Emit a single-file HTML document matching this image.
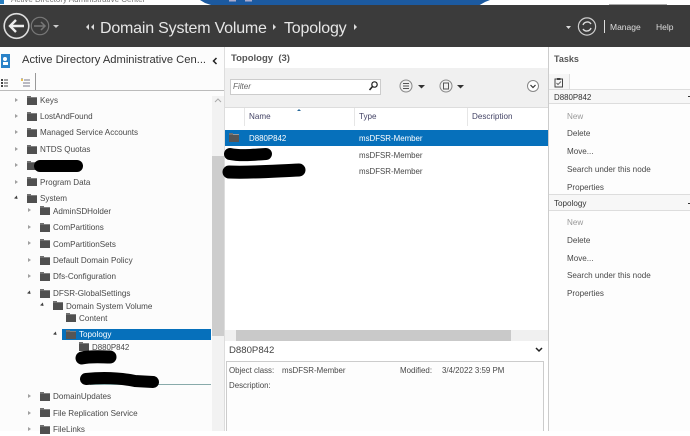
<!DOCTYPE html>
<html><head><meta charset="utf-8"><style>
html,body{margin:0;padding:0}
body{width:690px;height:431px;overflow:hidden;position:relative;background:#fff;font-family:"Liberation Sans",sans-serif;color:#333;font-size:8.1px;filter:blur(.25px)}
.a{position:absolute;white-space:nowrap}
.t{position:absolute;white-space:nowrap;line-height:12px;color:#484848;margin-top:1px}
.n{font-size:7.9px}
.f{position:absolute;width:10px;height:7px;background:#505050;border-top:1px solid #808080}
.f:before{content:"";position:absolute;left:0;top:-2px;width:4px;height:2px;background:#707070}
.tri{position:absolute;width:0;height:0;border-left:3px solid #a0a0a0;border-top:2.5px solid transparent;border-bottom:2.5px solid transparent}
.tri.o{border-left:3px solid #444;transform:rotate(45deg)}
.b{position:absolute;background:#000;border-radius:8px}
</style></head><body>
<!-- top strip -->
<div class="a" style="left:0;top:0;width:690px;height:5px;background:#fff"></div>
<div class="a" style="left:11px;top:-5px;color:#777;font-size:8px;line-height:10px">Active Directory Administrative Center</div>
<div class="a" style="left:0;top:0;width:4px;height:4px;background:#2a7fc0"></div>
<svg class="a" style="left:195px;top:0" width="310" height="6"><polygon points="5,0 295,0 290,2 283,6 19,6 10,3" fill="#1c5aa0"/><rect x="34" y="0" width="7" height="1.5" fill="#aac"/><rect x="50" y="0" width="7" height="1.5" fill="#aac"/></svg>
<div class="a" style="left:609px;top:4px;width:58px;height:1px;background:#aaa"></div>
<!-- dark nav -->
<div class="a" style="left:0;top:5px;width:690px;height:42px;background:#3b3b3b"></div>
<svg class="a" style="left:0;top:10px" width="62" height="32">
<circle cx="16.5" cy="16" r="12.3" fill="none" stroke="#ddd" stroke-width="1.6"/>
<path d="M10 16H24M16 10L10 16L16 22" fill="none" stroke="#eee" stroke-width="2.4"/>
<circle cx="40" cy="16" r="8.7" fill="none" stroke="#777" stroke-width="1.2"/>
<path d="M34 16H45M41 12L45 16L41 20" fill="none" stroke="#777" stroke-width="1.5"/>
<polygon points="53,15 59,15 56,18" fill="#ccc"/>
</svg>
<svg class="a" style="left:85px;top:23px" width="11" height="8"><polygon points="4,1 4,7 1,4" fill="#ddd"/><polygon points="9,1 9,7 6,4" fill="#ddd"/></svg>
<div class="a" style="left:100px;top:18px;color:#e6e6e6;font-size:16px;line-height:22px;letter-spacing:-.2px">Domain System Volume</div>
<div class="a" style="left:273px;top:24px;width:0;height:0;border-left:3px solid #ddd;border-top:3px solid transparent;border-bottom:3px solid transparent"></div>
<div class="a" style="left:284px;top:18px;color:#e6e6e6;font-size:16px;line-height:22px;letter-spacing:-.2px">Topology</div>
<div class="a" style="left:354px;top:24px;width:0;height:0;border-left:3px solid #ddd;border-top:3px solid transparent;border-bottom:3px solid transparent"></div>
<svg class="a" style="left:565px;top:16px" width="40" height="22">
<polygon points="1,10 6,10 3.5,13" fill="#ddd"/>
<circle cx="22" cy="10.5" r="8.6" fill="none" stroke="#ccc" stroke-width="1.2"/>
<path d="M18 9A4.5 4.5 0 0 1 26 8M26 12A4.5 4.5 0 0 1 18 13" fill="none" stroke="#ddd" stroke-width="1.4"/>
</svg>
<div class="a" style="left:604px;top:20px;width:1px;height:13px;background:#ddd"></div>
<div class="a" style="left:610px;top:21px;color:#ddd;font-size:8.5px;line-height:12px">Manage</div>
<div class="a" style="left:656px;top:21px;color:#ddd;font-size:8.5px;line-height:12px">Help</div>

<!-- left pane -->
<div class="a" style="left:0;top:47px;width:224px;height:384px;background:#fcfcfc"></div>
<div class="a" style="left:1px;top:54px;width:9px;height:14px;background:#2a82c8"></div>
<div class="a" style="left:3px;top:57px;width:4px;height:4px;border-radius:50%;background:#fff"></div>
<div class="a" style="left:3px;top:62px;width:5px;height:3px;background:#fff"></div>
<div class="a" style="left:22px;top:53px;font-size:11.2px;line-height:15px;color:#333">Active Directory Administrative Cen...</div>
<svg class="a" style="left:211px;top:56px" width="8" height="10"><path d="M5.5 2L2.5 5L5.5 8" fill="none" stroke="#222" stroke-width="1.5"/></svg>
<svg class="a" style="left:0;top:76px" width="36" height="16"><path d="M1 3h2v2H1zM1 6h2v2H1zM1 9h2v2H1z" fill="#444"/><path d="M4 4h4M4 7h4M4 10h4" stroke="#444"/><path d="M21 3h2M24 4h6M23 7h7M23 10h7" stroke="#778" fill="none"/><rect x="21" y="3" width="2" height="2" fill="#e8c050"/></svg>
<div class="a" style="left:0;top:90px;width:35px;height:1px;background:#bbb"></div>
<div class="a" style="left:35px;top:73px;width:1px;height:18px;background:#999"></div>
<div class="a" style="left:35px;top:90px;width:189px;height:1px;background:#bbb"></div>
<!-- scrollbar -->
<div class="a" style="left:212px;top:96px;width:12px;height:335px;background:#f2f2f2"></div>
<div class="a" style="left:212px;top:156px;width:12px;height:180px;background:#cdcdcd"></div>
<svg class="a" style="left:214px;top:98px" width="8" height="6"><path d="M1 4L4 1L7 4" fill="none" stroke="#aaa"/></svg>

<div class="tri" style="left:15px;top:98px"></div><div class="f" style="left:27px;top:97px"></div><div class="t" style="left:40px;top:94px">Keys</div>
<div class="tri" style="left:15px;top:114px"></div><div class="f" style="left:27px;top:113px"></div><div class="t" style="left:40px;top:110px">LostAndFound</div>
<div class="tri" style="left:15px;top:130px"></div><div class="f" style="left:27px;top:129px"></div><div class="t" style="left:40px;top:126px">Managed Service Accounts</div>
<div class="tri" style="left:15px;top:147px"></div><div class="f" style="left:27px;top:146px"></div><div class="t" style="left:40px;top:143px">NTDS Quotas</div>
<div class="tri" style="left:15px;top:163px"></div><div class="f" style="left:27px;top:162px"></div>
<div class="b" style="left:34px;top:160px;width:49px;height:12px"></div>
<div class="tri" style="left:15px;top:180px"></div><div class="f" style="left:27px;top:178px"></div><div class="t" style="left:40px;top:176px">Program Data</div>
<div class="tri o" style="left:15px;top:196px"></div><div class="f" style="left:27px;top:195px"></div><div class="t" style="left:40px;top:192px">System</div>
<div class="tri" style="left:28px;top:208px"></div><div class="f" style="left:40px;top:207px"></div><div class="t" style="left:53px;top:205px">AdminSDHolder</div>
<div class="tri" style="left:28px;top:225px"></div><div class="f" style="left:40px;top:224px"></div><div class="t" style="left:53px;top:221px">ComPartitions</div>
<div class="tri" style="left:28px;top:241px"></div><div class="f" style="left:40px;top:240px"></div><div class="t" style="left:53px;top:238px">ComPartitionSets</div>
<div class="tri" style="left:28px;top:258px"></div><div class="f" style="left:40px;top:257px"></div><div class="t" style="left:53px;top:254px">Default Domain Policy</div>
<div class="tri" style="left:28px;top:274px"></div><div class="f" style="left:40px;top:273px"></div><div class="t" style="left:53px;top:270px">Dfs-Configuration</div>
<div class="tri o" style="left:28px;top:291px"></div><div class="f" style="left:40px;top:290px"></div><div class="t" style="left:53px;top:287px">DFSR-GlobalSettings</div>
<div class="tri o" style="left:41px;top:303px"></div><div class="f" style="left:53px;top:302px"></div><div class="t" style="left:66px;top:300px">Domain System Volume</div>
<div class="f" style="left:66px;top:314px"></div><div class="t" style="left:79px;top:312px">Content</div>
<div class="tri o" style="left:54px;top:332px"></div>
<div class="a" style="left:62px;top:329px;width:149px;height:11px;background:#0670bb"></div>
<div class="f" style="left:66px;top:331px;background:#555"></div><div class="t" style="left:79px;top:328px;color:#fff;line-height:11px">Topology</div>
<div class="f" style="left:79px;top:343px"></div><div class="t n" style="left:92px;top:341px">D880P842</div>
<div class="a" style="left:90px;top:384px;width:121px;height:1px;background:#8aa"></div>
<svg class="a" style="left:70px;top:350px" width="95" height="40"><path d="M12 8C20 6 32 7 40 7" stroke="#000" stroke-width="13" stroke-linecap="round" fill="none"/><path d="M16 29C35 27 50 28 65 31L83 32" stroke="#000" stroke-width="12" stroke-linecap="round" fill="none"/></svg>
<div class="tri" style="left:28px;top:394px"></div><div class="f" style="left:40px;top:393px"></div><div class="t" style="left:53px;top:390px">DomainUpdates</div>
<div class="tri" style="left:28px;top:411px"></div><div class="f" style="left:40px;top:409px"></div><div class="t" style="left:53px;top:407px">File Replication Service</div>
<div class="tri" style="left:28px;top:427px"></div><div class="f" style="left:40px;top:426px"></div><div class="t" style="left:53px;top:423px">FileLinks</div>

<!-- center pane -->
<div class="a" style="left:224px;top:47px;width:324px;height:384px;background:#fff"></div>
<div class="a" style="left:224px;top:47px;width:1px;height:384px;background:#ddd"></div>
<div class="a" style="left:231px;top:53px;font-size:9.5px;font-weight:bold;line-height:12px;color:#555">Topology&nbsp; (3)</div>
<div class="a" style="left:225px;top:68px;width:323px;height:39px;background:#f0f0f0"></div>
<div class="a" style="left:230px;top:79px;width:149px;height:14px;background:#fff;border:1px solid #ccc"></div>
<div class="a" style="left:233px;top:81px;font-style:italic;color:#666;line-height:12px">Filter</div>
<svg class="a" style="left:368px;top:80px" width="11" height="12"><circle cx="6.5" cy="4.5" r="2.7" fill="none" stroke="#222" stroke-width="1.2"/><path d="M4.5 6.5L1.5 10" stroke="#222" stroke-width="1.6"/></svg>
<svg class="a" style="left:398px;top:78px" width="90" height="16"><circle cx="8" cy="8" r="6" fill="none" stroke="#888"/><path d="M5 5.5h6M5 8h6M5 10.5h6" stroke="#555"/><polygon points="20,7 27,7 23.5,10.5" fill="#333"/><circle cx="48" cy="8" r="6" fill="none" stroke="#888"/><rect x="45.5" y="5" width="5" height="6" fill="none" stroke="#555"/><polygon points="59,7 66,7 62.5,10.5" fill="#333"/></svg>
<svg class="a" style="left:526px;top:79px" width="14" height="14"><circle cx="7" cy="7" r="5.5" fill="#fff" stroke="#888"/><path d="M4.5 6L7 8.5L9.5 6" fill="none" stroke="#333" stroke-width="1.2"/></svg>
<div class="a" style="left:225px;top:107px;width:323px;height:1px;background:#ddd"></div>
<div class="a" style="left:244px;top:108px;width:1px;height:18px;background:#e6e6e6"></div>
<div class="a" style="left:354px;top:108px;width:1px;height:18px;background:#e6e6e6"></div>
<div class="a" style="left:467px;top:108px;width:1px;height:18px;background:#e6e6e6"></div>
<div class="a" style="left:297px;top:109px;width:0;height:0;border-left:2.5px solid transparent;border-right:2.5px solid transparent;border-bottom:2.5px solid #2a6a9a"></div>
<div class="t" style="left:249px;top:110px;color:#446">Name</div>
<div class="t" style="left:359px;top:110px;color:#446">Type</div>
<div class="t" style="left:472px;top:110px;color:#446">Description</div>
<div class="a" style="left:225px;top:130px;width:323px;height:16px;background:#0670bb"></div>
<div class="f" style="left:229px;top:134px;background:#555;border-top-color:#999"></div>
<div class="t n" style="left:249px;top:132px;color:#fff">D880P842</div>
<div class="t n" style="left:359px;top:132px;color:#fff">msDFSR-Member</div>
<div class="t n" style="left:359px;top:149px">msDFSR-Member</div>
<div class="t n" style="left:359px;top:165px">msDFSR-Member</div>
<svg class="a" style="left:220px;top:146px" width="92" height="36"><path d="M10 8C20 10 32 9 46 8" stroke="#000" stroke-width="12" stroke-linecap="round" fill="none"/><path d="M9 26C30 27 55 25 79 24" stroke="#000" stroke-width="13" stroke-linecap="round" fill="none"/></svg>
<!-- h scrollbar -->
<div class="a" style="left:225px;top:330px;width:323px;height:11px;background:#f0f0f0"></div>
<div class="a" style="left:236px;top:330px;width:275px;height:11px;background:#c9c9c9"></div>
<div class="a" style="left:229px;top:344px;font-size:9.6px;line-height:14px;color:#444">D880P842</div>
<svg class="a" style="left:534px;top:346px" width="10" height="8"><path d="M2 2L5 5L8 2" fill="none" stroke="#222" stroke-width="1.5"/></svg>
<div class="a" style="left:226px;top:361px;width:318px;height:70px;background:#fdfdfd;border:1px solid #ccc;box-sizing:border-box;border-bottom:none"></div>
<div class="t n" style="left:229px;top:364px">Object class:</div>
<div class="t n" style="left:282px;top:364px">msDFSR-Member</div>
<div class="t n" style="left:400px;top:364px">Modified:</div>
<div class="t n" style="left:442px;top:364px">3/4/2022 3:59 PM</div>
<div class="t n" style="left:229px;top:379px">Description:</div>

<!-- tasks -->
<div class="a" style="left:548px;top:47px;width:1px;height:384px;background:#ccc"></div>
<div class="a" style="left:549px;top:47px;width:141px;height:384px;background:#fdfdfd"></div>
<div class="a" style="left:554px;top:53px;font-size:9px;font-weight:bold;line-height:12px;color:#555">Tasks</div>
<div class="a" style="left:549px;top:74px;width:20px;height:15px;background:#f6f6f6;border-right:1px solid #ddd"></div>
<svg class="a" style="left:553px;top:77px" width="12" height="11"><rect x="2" y="2" width="7.5" height="8" fill="none" stroke="#444"/><rect x="4" y="1" width="3.5" height="2" fill="#444"/><path d="M3.5 6L5 7.5L8 4.5" fill="none" stroke="#666"/></svg>
<div class="a" style="left:549px;top:89px;width:141px;height:15px;background:#f7f7f7;border-top:1px solid #ddd;border-bottom:1px solid #ddd;box-sizing:border-box"></div>
<div class="t n" style="left:554px;top:91px;color:#333">D880P842</div>
<div class="a" style="left:688px;top:96px;width:2px;height:1px;background:#333"></div>
<div class="t" style="left:567px;top:110px;color:#999">New</div>
<div class="t" style="left:567px;top:127px">Delete</div>
<div class="t" style="left:567px;top:145px">Move...</div>
<div class="t" style="left:567px;top:163px">Search under this node</div>
<div class="t" style="left:567px;top:181px">Properties</div>
<div class="a" style="left:549px;top:194px;width:141px;height:17px;background:#f7f7f7;border-top:1px solid #ddd;border-bottom:1px solid #ddd;box-sizing:border-box"></div>
<div class="t" style="left:554px;top:197px;color:#333">Topology</div>
<div class="a" style="left:688px;top:203px;width:2px;height:1px;background:#333"></div>
<div class="t" style="left:567px;top:216px;color:#999">New</div>
<div class="t" style="left:567px;top:234px">Delete</div>
<div class="t" style="left:567px;top:252px">Move...</div>
<div class="t" style="left:567px;top:269px">Search under this node</div>
<div class="t" style="left:567px;top:287px">Properties</div>
</body></html>
